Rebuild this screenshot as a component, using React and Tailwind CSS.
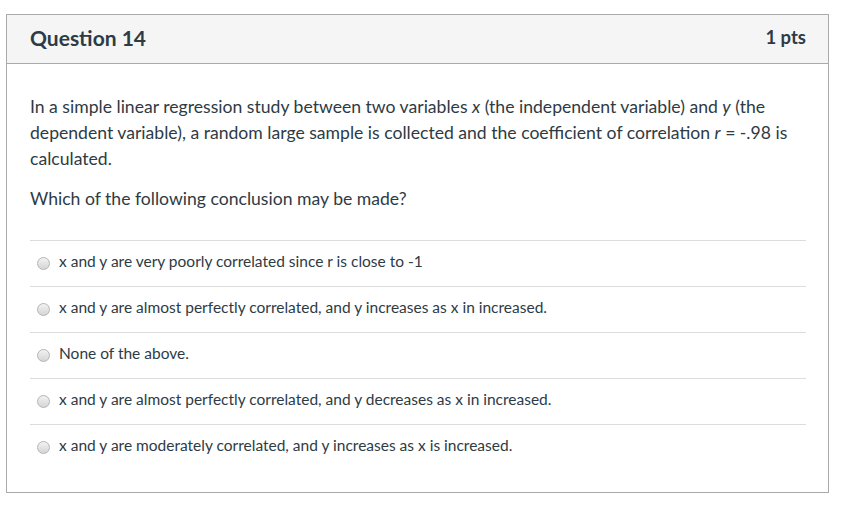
const answers = [
  'x and y are very poorly correlated since r is close to -1',
  'x and y are almost perfectly correlated, and y increases as x in increased.',
  'None of the above.',
  'x and y are almost perfectly correlated, and y decreases as x in increased.',
  'x and y are moderately correlated, and y increases as x is increased.',
]

export default function App() {
  return (
    <div className="w-[861px] h-[505px] bg-white pt-[14px] pl-[6px] font-['Lato','Liberation_Sans',sans-serif] text-[#2d3b45]">
      <div className="w-[823px] h-[479px] border border-[#aaaaaa] flex flex-col">
        <div className="h-[49px] shrink-0 bg-[#f5f5f5] border-b border-[#aaaaaa] flex items-center justify-between pl-[23px] pr-[22px]">
          <h2 className="text-[21px] font-bold leading-none pb-[4px]">Question 14</h2>
          <span className="text-[18.5px] font-bold leading-none pb-[4px]">1 pts</span>
        </div>
        <div className="pt-[30px] pl-[23px] pr-[22px]">
          <p className="text-[17.6px] leading-[26px] whitespace-nowrap">
            In a simple linear regression study between two variables <i>x</i> (the independent variable) and <i>y</i> (the
            <br />
            dependent variable), a random large sample is collected and the coefficient of correlation <i>r</i> = -.98 is
            <br />
            calculated.
          </p>
          <p className="text-[17.6px] leading-[26px] mt-[14px]">Which of the following conclusion may be made?</p>
          <div className="mt-[28px]">
            {answers.map((a) => (
              <div key={a} className="h-[46px] border-t border-[#dddddd] flex items-center pl-[7px] gap-[9px]">
                <span className="w-[13px] h-[13px] rounded-full border border-[#b5b5b5] bg-gradient-to-b from-[#f2f2f2] to-[#d5d5d5]" />
                <span className="text-[15.5px] leading-none pb-[3px]">{a}</span>
              </div>
            ))}
          </div>
        </div>
      </div>
    </div>
  )
}
